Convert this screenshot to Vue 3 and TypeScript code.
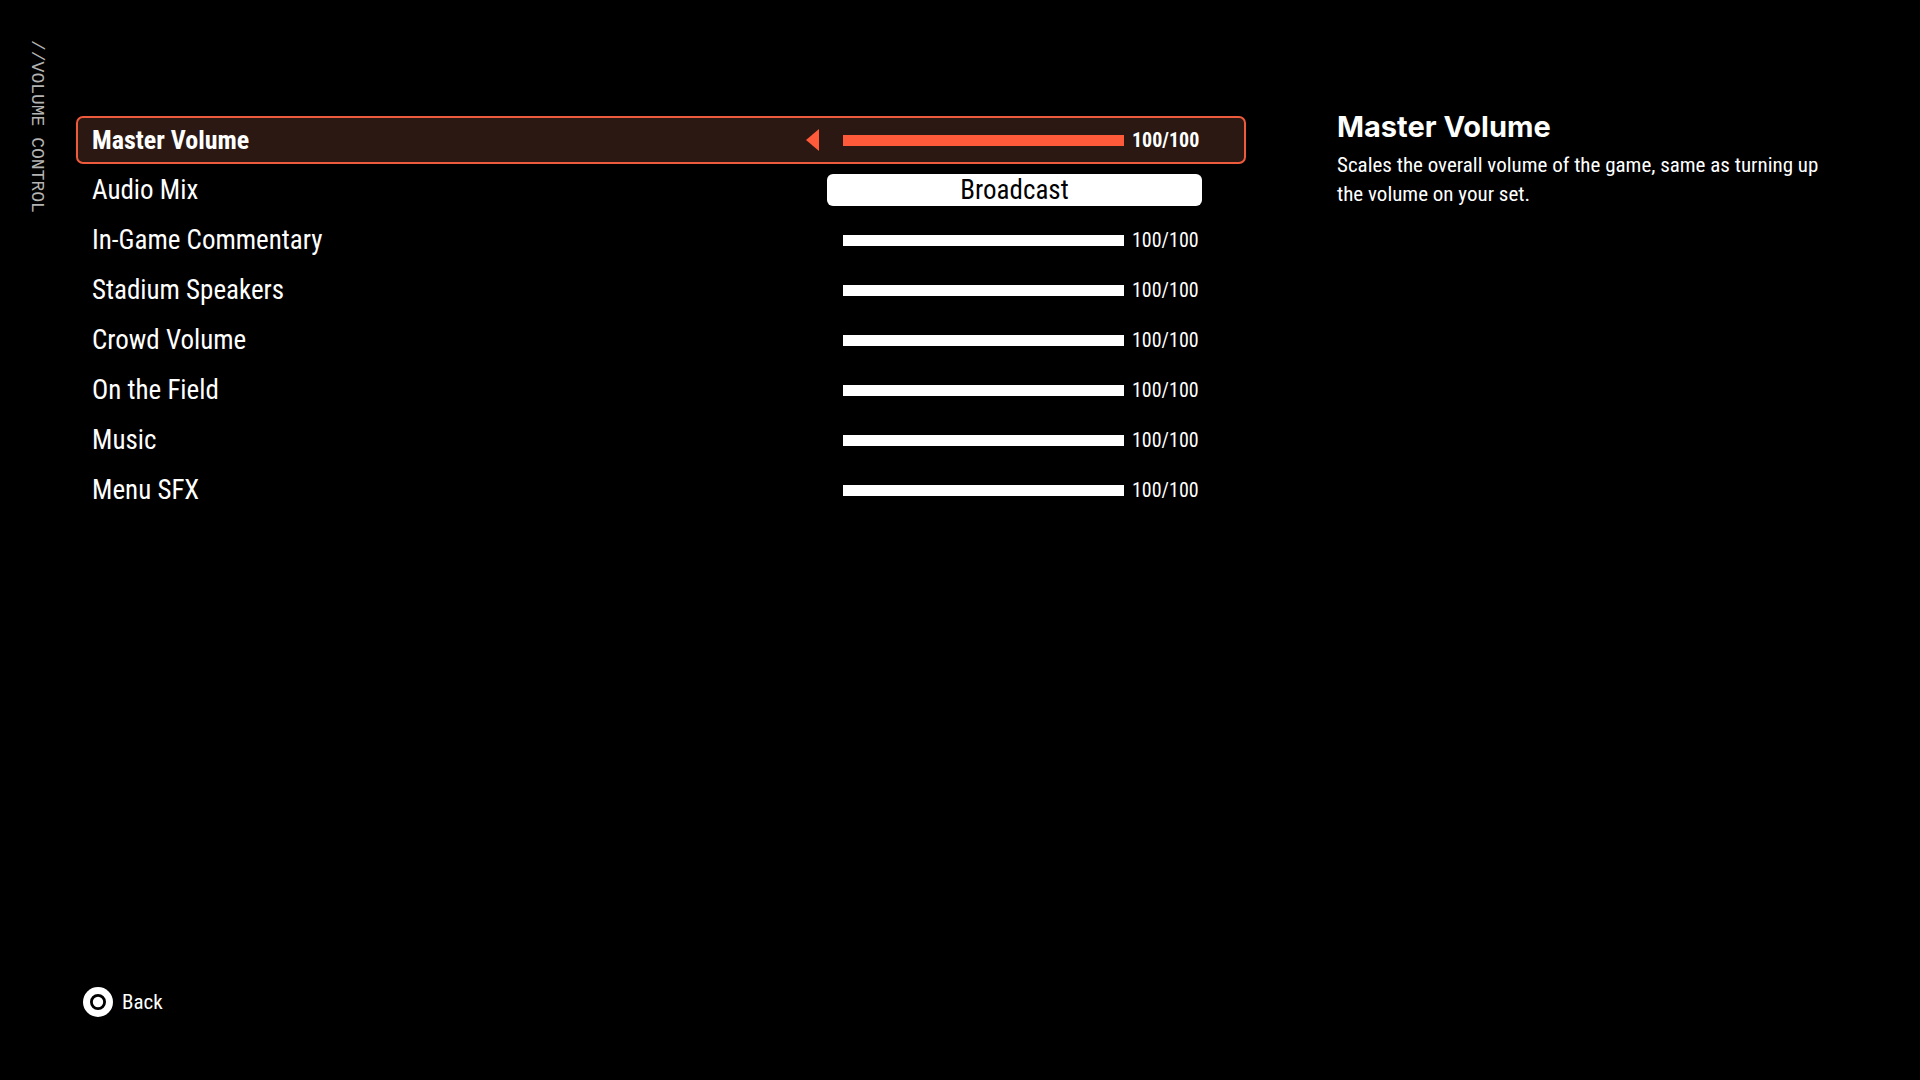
<script setup lang="ts">
import { ref, computed } from 'vue'

interface Setting {
  id: string
  label: string
  kind: 'slider' | 'choice'
  value: number
}

const settings = ref<Setting[]>([
  { id: 'master', label: 'Master Volume', kind: 'slider', value: 100 },
  { id: 'mix', label: 'Audio Mix', kind: 'choice', value: 0 },
  { id: 'commentary', label: 'In-Game Commentary', kind: 'slider', value: 100 },
  { id: 'speakers', label: 'Stadium Speakers', kind: 'slider', value: 100 },
  { id: 'crowd', label: 'Crowd Volume', kind: 'slider', value: 100 },
  { id: 'field', label: 'On the Field', kind: 'slider', value: 100 },
  { id: 'music', label: 'Music', kind: 'slider', value: 100 },
  { id: 'menu', label: 'Menu SFX', kind: 'slider', value: 100 },
])

const selectedId = ref('master')
const mix = ref('Broadcast')
const selected = computed(() => settings.value.find((s) => s.id === selectedId.value)!)

function lower(item: Setting) {
  item.value = Math.max(0, item.value - 5)
}
</script>

<template>
  <div class="screen">
    <p class="rail">//VOLUME CONTROL</p>

    <main class="settings">
      <div
        v-for="item in settings"
        :key="item.id"
        class="row"
        :class="{ selected: item.id === selectedId }"
        @click="selectedId = item.id"
      >
        <label class="name" :for="item.id">{{ item.label }}</label>
        <button
          v-if="item.id === selectedId && item.kind === 'slider'"
          class="step"
          type="button"
          :aria-label="'Lower ' + item.label"
          @click="lower(item)"
        >
          <svg width="13" height="22" viewBox="0 0 13 22"><path d="M13 0V22L0 11Z" fill="currentColor" /></svg>
        </button>
        <div v-if="item.kind === 'slider'" class="control">
          <input
            :id="item.id"
            v-model.number="item.value"
            class="slider"
            type="range"
            min="0"
            max="100"
            :style="{ backgroundSize: item.value + '% 100%' }"
          />
          <output class="value" :for="item.id">{{ item.value }}/100</output>
        </div>
        <select v-else :id="item.id" v-model="mix" class="choice">
          <option>Broadcast</option>
        </select>
      </div>
    </main>

    <aside class="details">
      <h1 class="title">{{ selected.label }}</h1>
      <p class="text">Scales the overall volume of the game, same as turning up the volume on your set.</p>
    </aside>

    <footer class="footer">
      <button class="back" type="button">
        <svg width="30" height="30" viewBox="0 0 30 30" aria-hidden="true">
          <circle cx="15" cy="15" r="15" fill="#fff" />
          <circle cx="15" cy="15" r="6.6" fill="none" stroke="#000" stroke-width="2.8" />
        </svg>
        <span>Back</span>
      </button>
    </footer>
  </div>
</template>

<style>
body {
  background: #000;
}
</style>

<style scoped>
.screen {
  box-sizing: border-box;
  min-height: 100vh;
  display: grid;
  grid-template-columns: 76px minmax(0, 1170fr) minmax(0, 674fr);
  grid-template-rows: 1fr auto;
  background: #000;
  color: #fff;
  font-family: 'Roboto Condensed', 'Liberation Sans Narrow', 'Liberation Sans', sans-serif;
  font-size: 27px;
}

.rail {
  margin: 40px 0 0 27px;
  justify-self: start;
  writing-mode: vertical-rl;
  font-family: 'Liberation Mono', monospace;
  font-size: 18px;
  line-height: 20px;
  color: #b4b4b4;
  white-space: nowrap;
}

.settings {
  display: flex;
  flex-direction: column;
  gap: 2px;
  padding-top: 116px;
}

.row {
  box-sizing: border-box;
  height: 48px;
  display: flex;
  align-items: center;
  gap: 8px;
  padding: 0 42px 0 14px;
  border: 2px solid transparent;
  border-radius: 7px;
}

.selected {
  border-color: #ee5a3c;
  background: #2b1813;
  font-weight: 700;
}

.name {
  flex: 1;
}

.selected .name {
  font-size: 26px;
}

.step {
  display: flex;
  padding: 0;
  border: 0;
  background: none;
  color: #ff5a3a;
}

.control {
  box-sizing: border-box;
  width: 375px;
  display: flex;
  align-items: center;
  gap: 8px;
  padding-left: 16px;
}

.slider {
  appearance: none;
  flex: none;
  width: 281px;
  height: 11px;
  margin: 0;
  border-radius: 0;
  background: linear-gradient(#fff, #fff) no-repeat #333;
}

.selected .slider {
  background-image: linear-gradient(#ff5a3a, #ff5a3a);
}

.slider::-webkit-slider-thumb {
  appearance: none;
  width: 0;
  height: 0;
}

.value {
  font-size: 20px;
}

.choice {
  appearance: none;
  width: 375px;
  height: 32px;
  padding: 0;
  border: 0;
  border-radius: 6px;
  background: #fff;
  color: #000;
  font: inherit;
  line-height: 32px;
  text-align: center;
  text-align-last: center;
}

.details {
  padding: 110px 80px 0 91px;
}

.title {
  margin: 0;
  font-family: Inter, 'Liberation Sans', sans-serif;
  font-size: 29px;
  font-weight: 700;
  line-height: 34px;
}

.text {
  margin: 7px 0 0;
  font-size: 21px;
  line-height: 29px;
}

.footer {
  grid-column: 2 / -1;
  padding: 0 0 63px 7px;
}

.back {
  display: flex;
  align-items: center;
  gap: 9px;
  padding: 0;
  border: 0;
  background: none;
  color: #fff;
  font: inherit;
  font-size: 21px;
}
</style>
